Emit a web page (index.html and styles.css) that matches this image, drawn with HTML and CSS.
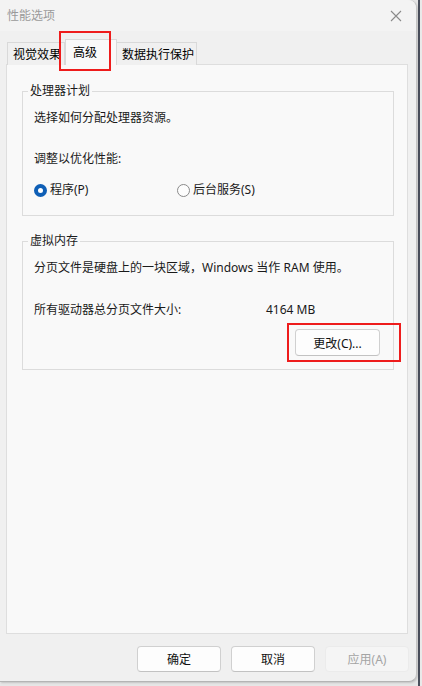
FILE: index.html
```html
<!DOCTYPE html>
<html lang="zh-CN">
<head>
  <meta charset="UTF-8">
  <meta name="viewport" content="width=device-width, initial-scale=1.0">
  <title>性能选项</title>
  <link rel="stylesheet" href="styles.css">
</head>
<body>
  <div class="window">
    <div class="title-bar">
      <span class="title">性能选项</span>
      <svg class="close" width="12" height="12" viewBox="0 0 12 12">
        <path d="M1 1 L11 11 M11 1 L1 11" stroke="#8a8a8a" stroke-width="1.1" fill="none"/>
      </svg>
    </div>

    <div class="tabs">
      <div class="tab tab-visual">视觉效果</div>
      <div class="tab tab-adv active">高级</div>
      <div class="tab tab-dep">数据执行保护</div>
    </div>

    <div class="panel">
      <fieldset class="group">
        <legend>处理器计划</legend>
        <p class="line">选择如何分配处理器资源。</p>
        <p class="line gap-lg">调整以优化性能:</p>
        <div class="radio-row">
          <label class="radio checked"><span class="dot"></span>程序(P)</label>
          <label class="radio"><span class="dot"></span>后台服务(S)</label>
        </div>
      </fieldset>

      <fieldset class="group group-vm">
        <legend>虚拟内存</legend>
        <p class="line">分页文件是硬盘上的一块区域，Windows 当作 RAM 使用。</p>
        <div class="line size-row">
          <span class="size-label">所有驱动器总分页文件大小:</span>
          <span>4164 MB</span>
        </div>
        <div class="change-row">
          <button class="btn btn-change">更改(C)...</button>
        </div>
      </fieldset>
    </div>

    <div class="footer">
      <button class="btn">确定</button>
      <button class="btn">取消</button>
      <button class="btn" disabled>应用(A)</button>
    </div>

    <div class="mark mark-tab"></div>
    <div class="mark mark-btn"></div>
  </div>
</body>
</html>
```

FILE: styles.css
```css
body {
  margin: 0;
  width: 422px;
  height: 686px;
  overflow: hidden;
  font-family: "Noto Sans", "Noto Sans CJK SC", sans-serif;
  font-size: 12px;
  line-height: 16px;
  color: #1a1a1a;
  background: linear-gradient(to right, #e6e6e6 418px, #4a4f5c 418px, #4a4f5c 420px, #e9e9e9 420px);
}

.window {
  position: relative;
  box-sizing: border-box;
  width: 417px;
  height: 682px;
  background-color: #f0f0f0;
  border-right: 1px solid #c4c4c4;
  border-bottom: 1px solid #b4b4b4;
  border-radius: 0 8px 8px 0;
  box-shadow: 1px 1px 2px rgba(0, 0, 0, 0.15);
  display: flex;
  flex-direction: column;
}

.title-bar {
  height: 31px;
  flex: none;
  display: flex;
  align-items: center;
  justify-content: space-between;
  padding: 0 14px 0 7px;
  background-color: #f3f3f3;
  border-radius: 0 8px 0 0;
}

.title {
  color: #9a9a9a;
}

.tabs {
  display: flex;
  align-items: flex-end;
  margin: 9px 0 0 7px;
  height: 25px;
  position: relative;
  z-index: 1;
}

.tab {
  box-sizing: border-box;
  height: 23px;
  line-height: 23px;
  padding-left: 5px;
  background-color: #f0f0f0;
  border: 1px solid #d9d9d9;
  border-bottom: none;
  color: #000;
  white-space: nowrap;
}

.tab-visual {
  width: 58px;
}

.tab-adv {
  width: 52px;
  margin-left: 0;
}

.tab-dep {
  width: 81px;
  margin-left: -1px;
}

.tab.active {
  height: 26px;
  line-height: 25px;
  padding-left: 7px;
  background-color: #f9f9f9;
  position: relative;
  z-index: 2;
}

.panel {
  height: 570px;
  box-sizing: border-box;
  margin: -1px 8px 0 6px;
  background-color: #f9f9f9;
  border: 1px solid #dedede;
  padding: 18px 13px 0 15px;
}

.group {
  margin: 0;
  border: 1px solid #dcdcdc;
  padding: 11px 11px 17px;
}

.group legend {
  padding: 0 2px;
  margin-left: -6px;
  line-height: 16px;
}

.group-vm {
  margin-top: 17px;
  padding-bottom: 13px;
}

.line {
  margin: 0;
  height: 16px;
}

.gap-lg {
  margin-top: 25px;
}

.radio-row {
  display: flex;
  margin-top: 15px;
  height: 16px;
  align-items: center;
}

.radio {
  display: flex;
  align-items: center;
  width: 143px;
}

.dot {
  box-sizing: border-box;
  width: 13px;
  height: 13px;
  border-radius: 50%;
  border: 1px solid #8a8a8a;
  background-color: #fdfdfd;
  margin-right: 3px;
}

.radio.checked .dot {
  border: 4px solid #0f5fb6;
  background-color: #fff;
}

.size-row {
  display: flex;
  margin-top: 26px;
}

.size-label {
  width: 232px;
}

.change-row {
  display: flex;
  justify-content: flex-end;
  margin-top: 11px;
  padding-right: 2px;
}

.btn {
  box-sizing: border-box;
  width: 84px;
  height: 26px;
  font-family: inherit;
  font-size: 12px;
  color: #111;
  background-color: #fdfdfd;
  border: 1px solid #d0d0d0;
  border-bottom-color: #c2c2c2;
  border-radius: 4px;
  padding: 0;
}

.btn-change {
  width: 85px;
  height: 27px;
}

.btn:disabled {
  color: #a4a4a4;
  background-color: #f5f5f5;
  border-color: #ebebeb;
}

.footer {
  display: flex;
  justify-content: flex-end;
  gap: 10px;
  margin: 12px 7px 0 0;
}

.mark {
  position: absolute;
  box-sizing: border-box;
  border: 2px solid #ee1c1c;
}

.mark-tab {
  left: 59px;
  top: 31px;
  width: 52px;
  height: 40px;
  z-index: 3;
}

.mark-btn {
  left: 287px;
  top: 323px;
  width: 114px;
  height: 39px;
}
```
